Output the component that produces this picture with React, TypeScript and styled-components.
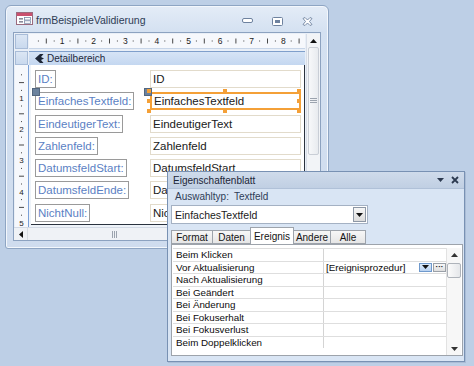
import React from "react";
import styled, { createGlobalStyle } from "styled-components";

const GlobalStyle = createGlobalStyle`
  html, body { margin: 0; padding: 0; }
  body {
    background: #bdcfe6;
    font-family: "Liberation Sans", Arial, sans-serif;
  }
`;

const Desktop = styled.div`
  position: relative;
  width: 474px;
  height: 366px;
  overflow: hidden;
  background: #bdcfe6;
`;

/* ---------- form design window ---------- */

const FormWindow = styled.div`
  position: absolute;
  left: 5px;
  top: 5px;
  width: 324px;
  height: 244px;
  box-sizing: border-box;
  display: flex;
  flex-direction: column;
  border: 1px solid #8ea5c3;
  border-radius: 6px 6px 3px 3px;
  background: linear-gradient(#e4ecf7, #d4e1f1 26px, #cfdcee);
  box-shadow: inset 0 0 0 1px #f3f7fc;
`;

const TitleBar = styled.div`
  height: 26px;
  flex: none;
  display: flex;
  align-items: center;
  padding: 0 15px 0 10px;
  gap: 2px;
`;

const TitleText = styled.span`
  flex: 1;
  font-size: 10.5px;
  color: #2e3c55;
  padding-top: 2px;
`;

const WinButtons = styled.div`
  display: flex;
  align-items: center;
  gap: 19px;
  padding-top: 4px;
`;

const Client = styled.div`
  flex: 1;
  margin: 0 7px 7px 7px;
  border: 1px solid #8ca2c0;
  background: #e9eff7;
  display: grid;
  grid-template-columns: 13px 1fr 14px;
  grid-template-rows: 15px 16px 1fr 13px;
  column-gap: 1px;
  padding: 1px 0 0 1px;
  min-height: 0;
`;

const RulerSquare = styled.div<{ $offset?: number }>`
  background: linear-gradient(#dbe6f4, #c9d9ee);
  border: 1px solid #a8bcd8;
  box-sizing: border-box;
  margin-top: ${(p) => p.$offset ?? 0}px;
`;

const TopRuler = styled.div`
  background: #f6f8fc;
  border-bottom: 1px solid #c7d5e8;
`;

const LeftRuler = styled.div`
  background: #f6f8fc;
  border-right: 2px solid #7aa0d8;
  margin-right: -2px;
  overflow: hidden;
`;

const Band = styled.div`
  margin-top: 2px;
  display: flex;
  align-items: center;
  gap: 3px;
  padding-left: 6px;
  background: linear-gradient(#d6e4f6, #c4d7f0);
  border-top: 1px solid #7f9fcb;
  font-size: 10px;
  color: #1f2b3e;
`;

const VScroll = styled.div`
  grid-row: 1 / 4;
  grid-column: 3;
  display: flex;
  flex-direction: column;
  align-items: stretch;
  background: #f2f4f7;
  border-left: 1px solid #d8dee8;
`;

const ScrollArrow = styled.div`
  height: 13px;
  display: flex;
  align-items: center;
  justify-content: center;
  flex: none;
`;

const VThumb = styled.div`
  height: 106px;
  margin: 0 1px;
  border: 1px solid #c9ced6;
  border-radius: 2px;
  background: linear-gradient(90deg, #f7f8fa, #e8ebef);
  display: flex;
  align-items: center;
  justify-content: center;
`;

const HScroll = styled.div`
  grid-row: 4;
  grid-column: 1 / 4;
  margin-left: -1px;
  display: flex;
  align-items: stretch;
  background: #eff2f6;
  border-top: 1px solid #d3dae5;
`;

const HArrow = styled.div`
  width: 13px;
  display: flex;
  align-items: center;
  justify-content: center;
  border-right: 1px solid #d7dce3;
`;

const HThumb = styled.div`
  width: 174px;
  display: flex;
  align-items: center;
  justify-content: center;
`;

const DetailArea = styled.div`
  background: #eef3f9;
  min-height: 0;
`;

const FormSection = styled.div`
  position: relative;
  width: 274px;
  height: 160px;
  margin-left: 2px;
  background: #ffffff;
  border-right: 1px solid #2a323e;
  border-bottom: 1px solid #2a323e;
  box-sizing: border-box;
`;

const FieldGrid = styled.div`
  display: grid;
  grid-template-columns: 115px 151px;
  grid-auto-rows: 18px;
  row-gap: 4.3px;
  padding: 5px 0 0 4px;
`;

const FieldLabel = styled.div`
  position: relative;
  justify-self: start;
  display: flex;
  align-items: center;
  padding: 0 2px;
  border: 1px solid #9a9a9a;
  font-size: 11.5px;
  color: #5b7fc4;
  white-space: nowrap;
`;

const TextBox = styled.div<{ $selected?: boolean }>`
  position: relative;
  display: flex;
  align-items: center;
  padding-left: 2px;
  border: ${(p) => (p.$selected ? "2px solid #f4a037" : "1px solid #e2dbcb")};
  box-sizing: border-box;
  background: #fff;
  font-size: 11.5px;
  color: #202020;
  white-space: nowrap;
  overflow: hidden;
`;

const MoveHandle = styled.span`
  position: absolute;
  left: -4px;
  top: -5px;
  width: 6px;
  height: 6px;
  background: #6b829e;
  border: 1px solid #52667f;
`;

const SizeHandle = styled.span`
  position: absolute;
  width: 4px;
  height: 4px;
  background: #f4a037;
`;

/* ---------- property sheet ---------- */

const Sheet = styled.div`
  position: absolute;
  left: 167px;
  top: 171px;
  width: 298px;
  height: 191px;
  box-sizing: border-box;
  display: flex;
  flex-direction: column;
  border: 1px solid #7891b3;
  background: #d9e5f4;
  box-shadow: 1px 1px 0 #aabcd5;
`;

const SheetTitle = styled.div`
  height: 16px;
  flex: none;
  display: flex;
  align-items: center;
  padding: 0 5px 0 5px;
  background: linear-gradient(#cfdbeb, #c0cfe3);
  border-bottom: 1px solid #b0c1d8;
  font-size: 10px;
  color: #1c2638;
`;

const SheetTitleText = styled.span`
  flex: 1;
`;

const SheetBody = styled.div`
  flex: 1;
  display: flex;
  flex-direction: column;
  padding: 0 1px 0 3px;
  min-height: 0;
`;

const SelType = styled.div`
  height: 14px;
  display: flex;
  align-items: center;
  gap: 5px;
  padding-left: 4px;
  font-size: 10px;
  color: #2f3d57;
`;

const Combo = styled.div`
  margin-top: 2px;
  width: 197px;
  height: 19px;
  box-sizing: border-box;
  display: flex;
  align-items: center;
  border: 1px solid #a4b1c3;
  background: #fff;
  font-size: 10.5px;
  color: #1a1a1a;
  padding-left: 3px;
`;

const ComboText = styled.span`
  flex: 1;
`;

const ComboButton = styled.span`
  width: 13px;
  height: 15px;
  margin-right: 1px;
  display: flex;
  align-items: center;
  justify-content: center;
  border: 1px solid #8d97a5;
  box-sizing: border-box;
  background: linear-gradient(#f6f6f6, #dcdcdc);
`;

const TabStrip = styled.div`
  margin-top: 3px;
  height: 17px;
  display: flex;
  align-items: flex-end;
`;

const Tab = styled.div<{ $w: number; $active?: boolean }>`
  width: ${(p) => p.$w}px;
  height: ${(p) => (p.$active ? 17 : 14)}px;
  box-sizing: border-box;
  display: flex;
  align-items: center;
  justify-content: center;
  margin-right: -1px;
  border: 1px solid #9da3ab;
  border-bottom: ${(p) => (p.$active ? "none" : "1px solid #9da3ab")};
  background: ${(p) =>
    p.$active ? "#ffffff" : "linear-gradient(#f7f7f7, #e6e6e6)"};
  font-size: 10px;
  color: #141414;
  position: relative;
  z-index: ${(p) => (p.$active ? 1 : 0)};
`;

const PropBox = styled.div`
  width: 292px;
  height: 112px;
  box-sizing: border-box;
  display: grid;
  grid-template-columns: 1fr 15px;
  border: 1px solid #9da3ab;
  background: #ffffff;
  padding: 3px 1px 0 1px;
`;

const PropRows = styled.div`
  display: flex;
  flex-direction: column;
`;

const PropRow = styled.div`
  height: 12.5px;
  box-sizing: border-box;
  display: grid;
  grid-template-columns: 151px 1fr;
  border-top: 1px solid #dedede;
  font-size: 9.8px;
  color: #0c0c0c;
`;

const PropName = styled.div`
  padding-left: 3px;
  border-right: 1px solid #d4d4d4;
  line-height: 11px;
  white-space: nowrap;
`;

const PropValue = styled.div`
  display: flex;
  align-items: center;
  padding-left: 2px;
  line-height: 11px;
  white-space: nowrap;
`;

const ValueText = styled.span`
  flex: 1;
`;

const MiniButton = styled.span<{ $hot?: boolean }>`
  width: 13px;
  height: 9px;
  margin-left: 1px;
  box-sizing: border-box;
  display: flex;
  align-items: center;
  justify-content: center;
  border: 1px solid ${(p) => (p.$hot ? "#6f99cc" : "#9aa0a8")};
  background: ${(p) =>
    p.$hot ? "linear-gradient(#dceaf9, #b9d2f0)" : "linear-gradient(#f8f8f8, #dedede)"};
  font-size: 8px;
  line-height: 6px;
  font-weight: bold;
  color: #111;
`;

const PropScroll = styled.div`
  display: flex;
  flex-direction: column;
  align-items: center;
  background: #f7f7f7;
  border-left: 1px solid #e2e2e2;
`;

const PropThumb = styled.div`
  width: 12px;
  height: 13px;
  margin-top: 2px;
  border: 1px solid #aeb3ba;
  border-radius: 2px;
  background: linear-gradient(90deg, #fbfbfb, #e5e7ea);
`;

const Spacer = styled.div`
  flex: 1;
`;

/* ---------- drawings ---------- */

const FormIcon = () => (
  <svg width="18" height="14" viewBox="0 0 18 14">
    <rect x="0.5" y="0.5" width="16" height="12" fill="#fff" stroke="#9b6b7e" />
    <rect x="1" y="1" width="15" height="3" fill="#c9506f" />
    <rect x="3" y="6" width="4" height="1.6" fill="#8a8a9a" />
    <rect x="3" y="9" width="4" height="1.6" fill="#8a8a9a" />
    <rect x="8.5" y="5.5" width="6" height="2.5" fill="#fff" stroke="#7a8aa8" strokeWidth="0.8" />
    <rect x="8.5" y="8.8" width="6" height="2.5" fill="#fff" stroke="#7a8aa8" strokeWidth="0.8" />
  </svg>
);

const MinIcon = () => (
  <svg width="11" height="6" viewBox="0 0 11 6">
    <rect x="0.5" y="0.5" width="10" height="4" rx="1.5" fill="#fff" stroke="#6e829f" />
  </svg>
);

const RestoreIcon = () => (
  <svg width="11" height="9" viewBox="0 0 11 9">
    <rect x="0.5" y="0.5" width="10" height="8" rx="1" fill="#fff" stroke="#6e829f" />
    <rect x="3" y="3" width="5" height="3" fill="#6e829f" />
  </svg>
);

const CloseIcon = () => (
  <svg width="11" height="9" viewBox="0 0 11 9">
    <path
      d="M1 1.5 L3 0.5 L5.5 3 L8 0.5 L10 1.5 L7.5 4.5 L10 7.5 L8 8.5 L5.5 6 L3 8.5 L1 7.5 L3.5 4.5 Z"
      fill="#fff"
      stroke="#6e829f"
      strokeWidth="0.9"
      strokeLinejoin="round"
    />
  </svg>
);

const BandIcon = () => (
  <svg width="9" height="9" viewBox="0 0 9 9">
    <path d="M0 4.5 L5 0 L8.5 0 L6 3 L9 4.5 L6 6 L8.5 9 L5 9 Z" fill="#1e2737" />
  </svg>
);

const Tri = ({ dir, color = "#111" }: { dir: "up" | "down" | "left"; color?: string }) => {
  const d =
    dir === "up" ? "M0 4 L3.5 0 L7 4 Z" : dir === "down" ? "M0 0 L7 0 L3.5 4 Z" : "M4 0 L4 7 L0 3.5 Z";
  return (
    <svg width={dir === "left" ? 4 : 7} height={dir === "left" ? 7 : 4} viewBox={dir === "left" ? "0 0 4 7" : "0 0 7 4"}>
      <path d={d} fill={color} />
    </svg>
  );
};

const Gripper = ({ vertical }: { vertical?: boolean }) =>
  vertical ? (
    <svg width="7" height="6" viewBox="0 0 7 6">
      <path d="M0 0.5 H7 M0 2.5 H7 M0 4.5 H7" stroke="#9ba3ae" strokeWidth="1" />
    </svg>
  ) : (
    <svg width="6" height="7" viewBox="0 0 6 7">
      <path d="M0.5 0 V7 M2.5 0 V7 M4.5 0 V7" stroke="#9ba3ae" strokeWidth="1" />
    </svg>
  );

const UNIT = 31.6;

const HorizontalRuler = () => {
  const marks = [];
  for (let q = 1; q < 36; q++) {
    const x = 1.5 + (q * UNIT) / 4;
    if (q % 4 === 0) {
      marks.push(
        <text key={q} x={x} y={10} fontSize="8.5" textAnchor="middle" fill="#222" fontFamily="Liberation Sans, Arial, sans-serif">
          {q / 4}
        </text>
      );
    } else if (q % 2 === 0) {
      marks.push(<line key={q} x1={x} x2={x} y1={4.5} y2={9.5} stroke="#333" strokeWidth="0.9" />);
    } else {
      marks.push(<rect key={q} x={x - 0.5} y={6.5} width={1} height={1} fill="#444" />);
    }
  }
  return (
    <svg width="100%" height="14">
      {marks}
    </svg>
  );
};

const VerticalRuler = () => {
  const marks = [];
  for (let q = 1; q < 21; q++) {
    const y = 2 + (q * 31.2) / 4;
    if (q % 4 === 0) {
      marks.push(
        <text key={q} x={6.5} y={y + 2.8} fontSize="8" textAnchor="middle" fill="#222" fontFamily="Liberation Sans, Arial, sans-serif">
          {q / 4}
        </text>
      );
    } else if (q % 2 === 0) {
      marks.push(<line key={q} x1={4} x2={9} y1={y} y2={y} stroke="#333" strokeWidth="0.9" />);
    } else {
      marks.push(<rect key={q} x={6} y={y - 0.5} width={1} height={1} fill="#444" />);
    }
  }
  return (
    <svg width="13" height="162">
      {marks}
    </svg>
  );
};

/* ---------- data ---------- */

const fields = [
  { label: "ID:", value: "ID" },
  { label: "EinfachesTextfeld:", value: "EinfachesTextfeld", selected: true },
  { label: "EindeutigerText:", value: "EindeutigerText" },
  { label: "Zahlenfeld:", value: "Zahlenfeld" },
  { label: "DatumsfeldStart:", value: "DatumsfeldStart" },
  { label: "DatumsfeldEnde:", value: "DatumsfeldEnde" },
  { label: "NichtNull:", value: "NichtNull" },
];

const tabs = [
  { name: "Format", w: 42 },
  { name: "Daten", w: 39 },
  { name: "Ereignis", w: 44, active: true },
  { name: "Andere", w: 38 },
  { name: "Alle", w: 36 },
];

const properties = [
  "Beim Klicken",
  "Vor Aktualisierung",
  "Nach Aktualisierung",
  "Bei Geändert",
  "Bei Änderung",
  "Bei Fokuserhalt",
  "Bei Fokusverlust",
  "Beim Doppelklicken",
];

const handleSpots = [
  { left: -3, top: -3 },
  { left: 73, top: -3 },
  { left: 147, top: -3 },
  { left: -3, top: 7 },
  { left: 147, top: 7 },
  { left: -3, top: 17 },
  { left: 73, top: 17 },
  { left: 147, top: 17 },
];

const App = () => {
  return (
    <Desktop>
      <GlobalStyle />
      <FormWindow>
        <TitleBar>
          <FormIcon />
          <TitleText>frmBeispieleValidierung</TitleText>
          <WinButtons>
            <MinIcon />
            <RestoreIcon />
            <CloseIcon />
          </WinButtons>
        </TitleBar>
        <Client>
          <RulerSquare />
          <TopRuler>
            <HorizontalRuler />
          </TopRuler>
          <VScroll>
            <ScrollArrow>
              <Tri dir="up" />
            </ScrollArrow>
            <VThumb>
              <Gripper vertical />
            </VThumb>
          </VScroll>
          <RulerSquare $offset={2} />
          <Band>
            <BandIcon />
            Detailbereich
          </Band>
          <LeftRuler>
            <VerticalRuler />
          </LeftRuler>
          <DetailArea>
            <FormSection>
              <FieldGrid>
                {fields.map((f) => (
                  <React.Fragment key={f.label}>
                    <FieldLabel>
                      {f.selected && <MoveHandle />}
                      {f.label}
                    </FieldLabel>
                    <TextBox $selected={f.selected}>
                      {f.value}
                    </TextBox>
                  </React.Fragment>
                ))}
              </FieldGrid>
              <MoveHandle style={{ left: 113, top: 23 }} />
              {handleSpots.map((h, i) => (
                <SizeHandle key={i} style={{ left: 119 + h.left, top: 27 + h.top }} />
              ))}
            </FormSection>
          </DetailArea>
          <HScroll>
            <HArrow>
              <Tri dir="left" />
            </HArrow>
            <HThumb>
              <Gripper />
            </HThumb>
          </HScroll>
        </Client>
      </FormWindow>

      <Sheet>
        <SheetTitle>
          <SheetTitleText>Eigenschaftenblatt</SheetTitleText>
          <Tri dir="down" color="#2c3a50" />
          <svg width="8" height="8" viewBox="0 0 8 8" style={{ marginLeft: 7 }}>
            <path d="M1 1 L7 7 M7 1 L1 7" stroke="#2c3a50" strokeWidth="1.8" />
          </svg>
        </SheetTitle>
        <SheetBody>
          <SelType>
            <span>Auswahltyp:</span>
            <span>Textfeld</span>
          </SelType>
          <Combo>
            <ComboText>EinfachesTextfeld</ComboText>
            <ComboButton>
              <Tri dir="down" />
            </ComboButton>
          </Combo>
          <TabStrip>
            {tabs.map((t) => (
              <Tab key={t.name} $w={t.w} $active={t.active}>
                {t.name}
              </Tab>
            ))}
          </TabStrip>
          <PropBox>
            <PropRows>
              {properties.map((p, i) => (
                <PropRow key={p}>
                  <PropName>{p}</PropName>
                  <PropValue>
                    {i === 1 && (
                      <>
                        <ValueText>[Ereignisprozedur]</ValueText>
                        <MiniButton $hot>
                          <Tri dir="down" />
                        </MiniButton>
                        <MiniButton>···</MiniButton>
                      </>
                    )}
                  </PropValue>
                </PropRow>
              ))}
            </PropRows>
            <PropScroll>
              <ScrollArrow>
                <Tri dir="up" color="#333" />
              </ScrollArrow>
              <PropThumb />
              <Spacer />
              <ScrollArrow>
                <Tri dir="down" color="#333" />
              </ScrollArrow>
            </PropScroll>
          </PropBox>
        </SheetBody>
      </Sheet>
    </Desktop>
  );
};

export default App;
